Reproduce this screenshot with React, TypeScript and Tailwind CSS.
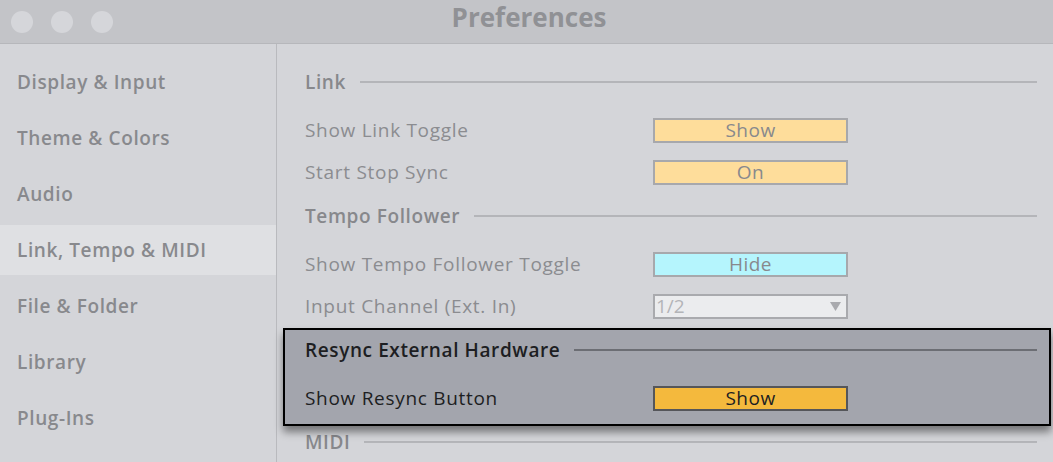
import React from "react";

const font = { fontFamily: "'Open Sans', 'Noto Sans', sans-serif" };

function Header({ title, dark }: { title: string; dark?: boolean }) {
  return (
    <div className="h-[46px] mb-[4px] flex items-center">
      <span
        className={
          "text-[19px] font-semibold tracking-[0.6px] whitespace-nowrap " +
          (dark ? "text-[#1d1e22]" : "text-[#87888c]")
        }
      >
        {title}
      </span>
      <div
        className={
          "ml-[14px] flex-1 h-[2px] " + (dark ? "bg-[#6c6e74]" : "bg-[#b4b5b9]")
        }
      />
    </div>
  );
}

function Row({
  label,
  children,
  dark,
}: {
  label: string;
  children: React.ReactNode;
  dark?: boolean;
}) {
  return (
    <div className="h-[42px] flex items-center">
      <div
        className={
          "w-[348px] text-[19px] tracking-[0.7px] whitespace-nowrap " + (dark ? "text-[#1d1e22]" : "text-[#8b8c90]")
        }
      >
        {label}
      </div>
      {children}
    </div>
  );
}

function Btn({
  text,
  bg,
  border,
  color,
}: {
  text: string;
  bg: string;
  border: string;
  color: string;
}) {
  return (
    <div
      className={
        "w-[195px] h-[25px] border-2 flex items-center justify-center text-[19px] tracking-[0.5px] leading-none " +
        bg +
        " " +
        border +
        " " +
        color
      }
    >
      {text}
    </div>
  );
}

export default function App() {
  const side = [
    "Display & Input",
    "Theme & Colors",
    "Audio",
    "Link, Tempo & MIDI",
    "File & Folder",
    "Library",
    "Plug-Ins",
  ];
  return (
    <div className="w-[1053px] h-[462px] overflow-hidden bg-[#d4d5d9] flex flex-col" style={font}>
      <div className="h-[44px] shrink-0 bg-[#c3c4c8] border-b border-[#b6b7bb] relative flex items-center">
        <div className="flex gap-[18px] pl-[11px]">
          <div className="w-[22px] h-[22px] rounded-full bg-[#d5d6da]" />
          <div className="w-[22px] h-[22px] rounded-full bg-[#d5d6da]" />
          <div className="w-[22px] h-[22px] rounded-full bg-[#d5d6da]" />
        </div>
        <div className="flex-1 flex justify-center pr-[108px]">
          <span className="text-[26px] font-bold text-[#909195] -mt-[8px]">Preferences</span>
        </div>
      </div>
      <div className="flex flex-1">
        <div className="w-[277px] shrink-0 border-r border-[#b9babe] pt-[13px] flex flex-col gap-[6px]">
          {side.map((s, i) => (
            <div
              key={s}
              className={
                "h-[50px] flex items-center pl-[17px] text-[19px] font-semibold tracking-[0.6px] whitespace-nowrap text-[#88898d] " +
                (i === 3 ? "bg-[#dfe0e3]" : "")
              }
            >
              {s}
            </div>
          ))}
        </div>
        <div className="flex-1 pl-[28px] pr-[16px] pt-[15px]">
          <Header title="Link" />
          <Row label="Show Link Toggle">
            <Btn text="Show" bg="bg-[#fedd9b]" border="border-[#a7a8ac]" color="text-[#88898d]" />
          </Row>
          <Row label="Start Stop Sync">
            <Btn text="On" bg="bg-[#fedd9b]" border="border-[#a7a8ac]" color="text-[#88898d]" />
          </Row>
          <Header title="Tempo Follower" />
          <Row label="Show Tempo Follower Toggle">
            <Btn text="Hide" bg="bg-[#b5f5fd]" border="border-[#a7a8ac]" color="text-[#88898d]" />
          </Row>
          <Row label="Input Channel (Ext. In)">
            <div className="w-[195px] h-[25px] border-2 border-[#a9aaae] bg-[#ebecee] flex items-center justify-between pl-[1px] pr-[5px] text-[19px] leading-none text-[#b3b4b8]">
              <span>1/2</span>
              <svg width="11" height="9" viewBox="0 0 11 9">
                <path d="M0 0 L11 0 L5.5 9 Z" fill="#a9aaae" />
              </svg>
            </div>
          </Row>
          <div className="relative z-10">
            <div className="absolute -left-[22px] -right-[14px] top-[1px] -bottom-[7px] border-2 border-black bg-[#a3a5ad] shadow-[0_6px_8px_rgba(0,0,0,0.45)]" />
            <div className="relative">
              <Header title="Resync External Hardware" dark />
              <Row label="Show Resync Button" dark>
                <Btn text="Show" bg="bg-[#f4b93d]" border="border-[#55565a]" color="text-[#1d1e22]" />
              </Row>
            </div>
          </div>
          <Header title="MIDI" />
        </div>
      </div>
    </div>
  );
}
